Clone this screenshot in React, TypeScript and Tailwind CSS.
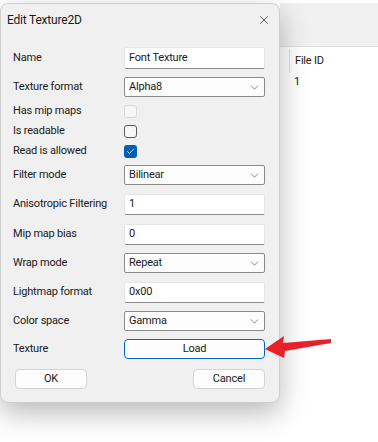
import { ChevronDown, X, Check } from 'lucide-react';

function TextBox({ value }: { value: string }) {
    return (
        <div className="w-[141px] h-full bg-white border border-[#e6e6e6] border-b-[#8c8c8c] rounded-[2px] flex items-center px-[4px]">
            {value}
        </div>
    );
}

function Combo({ value }: { value: string }) {
    return (
        <div className="w-[141px] h-full bg-[#fdfdfd] border border-[#8a8a8a] rounded-[2px] flex items-center justify-between pl-[4px] pr-[3px]">
            <span>{value}</span>
            <ChevronDown className="w-[13px] h-[13px] text-[#5f5f5f]" strokeWidth={1.3} />
        </div>
    );
}

function CheckBox({ state }: { state: 'disabled' | 'empty' | 'checked' }) {
    if (state === 'checked') {
        return (
            <div className="w-[13px] h-[13px] rounded-[3px] bg-[#005fb8] flex items-center justify-center">
                <Check className="w-[9px] h-[9px] text-white" strokeWidth={2} />
            </div>
        );
    }
    return (
        <div
            className={
                state === 'disabled'
                    ? 'w-[13px] h-[13px] rounded-[3px] border border-[#d9d9d9] bg-[#f7f7f7]'
                    : 'w-[13px] h-[13px] rounded-[3px] border border-[#5c5c5c] bg-[#f7f7f7]'
            }
        />
    );
}

function Row({ label, h, mt, children }: { label: string; h: string; mt: string; children: React.ReactNode }) {
    return (
        <div className={`flex items-center ${h} ${mt}`}>
            <div className="w-[123px] pl-[12px] shrink-0 whitespace-nowrap">{label}</div>
            {children}
        </div>
    );
}

export default function App() {
    return (
        <div
            className="relative w-[378px] h-[442px] bg-white overflow-hidden text-[11px] tracking-[-0.2px] text-[#1a1a1a]"
            style={{ fontFamily: 'Roboto, "Noto Sans", sans-serif' }}
        >
            <div className="flex pt-[3px] h-full">
                {/* dialog */}
                <div className="relative z-10 w-[280px] h-[400px] bg-[#f0f0f0] border border-[#cfcfcf] rounded-[8px] shadow-[0_10px_28px_rgba(0,0,0,0.28)] flex flex-col">
                    <div className="flex items-center justify-between h-[32px] pl-[6px] pr-[8px] text-[12px]">
                        <span>Edit Texture2D</span>
                        <X className="w-[14px] h-[14px] text-[#1a1a1a]" strokeWidth={1.2} />
                    </div>

                    <Row label="Name" h="h-[22px]" mt="mt-[11px]">
                        <TextBox value="Font Texture" />
                    </Row>
                    <Row label="Texture format" h="h-[20px]" mt="mt-[8px]">
                        <Combo value="Alpha8" />
                    </Row>
                    <Row label="Has mip maps" h="h-[13px]" mt="mt-[8px]">
                        <CheckBox state="disabled" />
                    </Row>
                    <Row label="Is readable" h="h-[13px]" mt="mt-[7px]">
                        <CheckBox state="empty" />
                    </Row>
                    <Row label="Read is allowed" h="h-[13px]" mt="mt-[7px]">
                        <CheckBox state="checked" />
                    </Row>
                    <Row label="Filter mode" h="h-[20px]" mt="mt-[7px]">
                        <Combo value="Bilinear" />
                    </Row>
                    <Row label="Anisotropic Filtering" h="h-[21px]" mt="mt-[9px]">
                        <TextBox value="1" />
                    </Row>
                    <Row label="Mip map bias" h="h-[21px]" mt="mt-[9px]">
                        <TextBox value="0" />
                    </Row>
                    <Row label="Wrap mode" h="h-[20px]" mt="mt-[8px]">
                        <Combo value="Repeat" />
                    </Row>
                    <Row label="Lightmap format" h="h-[21px]" mt="mt-[9px]">
                        <TextBox value="0x00" />
                    </Row>
                    <Row label="Color space" h="h-[20px]" mt="mt-[8px]">
                        <Combo value="Gamma" />
                    </Row>
                    <Row label="Texture" h="h-[20px]" mt="mt-[8px]">
                        <div className="w-[141px] h-full bg-[#fdfdfd] border border-[#0067c0] rounded-[4px] flex items-center justify-center">
                            Load
                        </div>
                    </Row>

                    <div className="flex justify-between h-[20px] mt-[10px] pl-[14px] pr-[14px]">
                        <div className="w-[72px] h-full bg-[#fdfdfd] border border-[#d4d4d4] rounded-[4px] flex items-center justify-center">
                            OK
                        </div>
                        <div className="w-[72px] h-full bg-[#fdfdfd] border border-[#d4d4d4] rounded-[4px] flex items-center justify-center">
                            Cancel
                        </div>
                    </div>
                </div>

                {/* window behind */}
                <div className="flex-1 flex flex-col">
                    <div className="h-[44px] bg-[#f0f0f0] border-b border-[#dedede]" />
                    <div className="flex h-[24px] mt-[2px]">
                        <div className="w-[10px] border-r border-[#e3e3e3]" />
                        <div className="pl-[5px] flex items-center">File ID</div>
                    </div>
                    <div className="pl-[14px] h-[18px] flex items-center">1</div>
                </div>
            </div>

            {/* annotation arrow */}
            <svg className="absolute left-0 top-0 z-20" width="378" height="442" viewBox="0 0 378 442">
                <polygon
                    points="265,349 284,336 283,343 331,339 331,343 285,351 284,358"
                    fill="#e8202a"
                />
            </svg>
        </div>
    );
}
